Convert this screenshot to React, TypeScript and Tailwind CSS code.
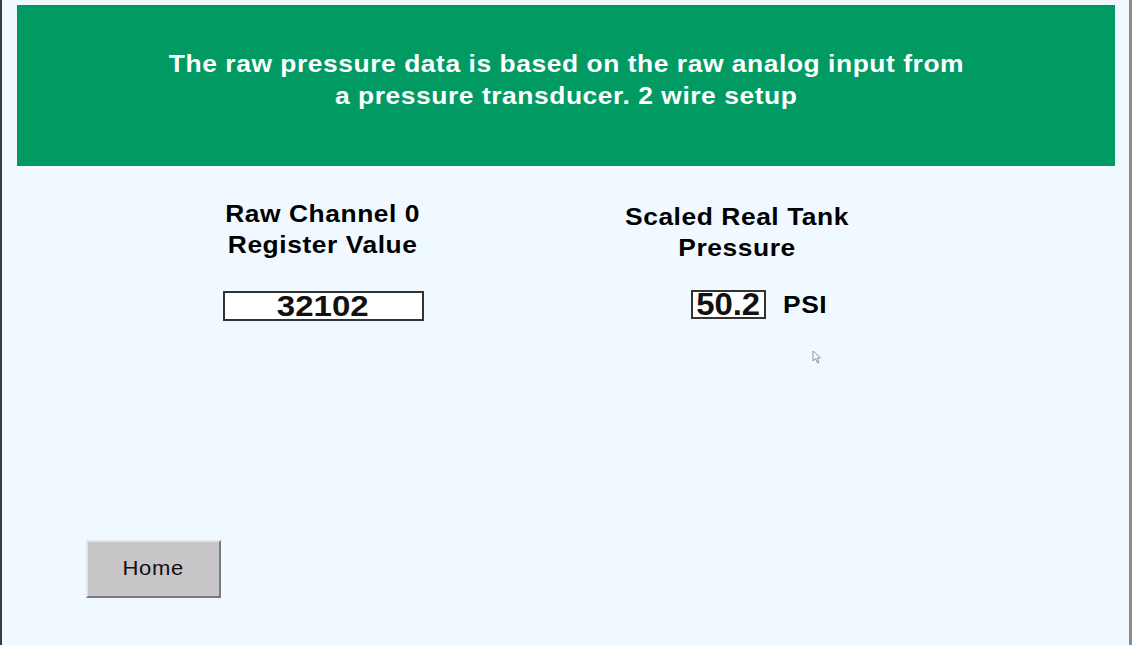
export default function App() {
  return (
    <div
      className="relative flex h-[645px] w-full flex-col border-l-2 border-r-[3px] border-l-[#3c3c3c] border-r-[#8a8a8a] bg-[#f0f9ff] pt-[5px]"
      style={{ fontFamily: '"Liberation Sans", Arial, sans-serif' }}
    >
      {/* header banner */}
      <div className="ml-[15px] flex h-[161px] w-[1098px] flex-col items-center justify-center bg-[#009a62] pb-[11px] text-[24px] font-bold leading-[32px] tracking-[0.5px] text-white">
        <div className="scale-x-[1.1]">The raw pressure data is based on the raw analog input from</div>
        <div className="scale-x-[1.1]">a pressure transducer. 2 wire setup</div>
      </div>

      <div className="ml-[191px] mt-[32px] flex gap-[154px]">
        {/* raw channel */}
        <div className="flex w-[260px] flex-col items-center">
          <div className="scale-x-[1.1] text-center text-[24px] font-bold leading-[31px] tracking-[0.5px] text-black">
            <div>Raw Channel 0</div>
            <div>Register Value</div>
          </div>
          <div className="mt-[31px] flex h-[30px] w-[201px] items-center justify-center border-2 border-[#333] bg-white text-[30px] font-bold leading-none text-[#111]">
            <span className="scale-x-[1.1]">32102</span>
          </div>
        </div>

        {/* scaled pressure */}
        <div className="mt-[3px] flex w-[260px] flex-col">
          <div className="scale-x-[1.1] text-center text-[24px] font-bold leading-[31px] tracking-[0.5px] text-black">
            <div>Scaled Real Tank</div>
            <div>Pressure</div>
          </div>
          <div className="mt-[27px] flex items-center pl-[84px]">
            <div className="flex h-[29px] w-[75px] items-center justify-center border-2 border-[#333] bg-white text-[31px] font-bold leading-none text-[#111]">
              <span className="scale-x-[1.06]">50.2</span>
            </div>
            <div className="ml-[19px] scale-x-[1.1] text-[24px] font-bold leading-none tracking-[0.5px] text-black">PSI</div>
          </div>
        </div>
      </div>

      <button className="ml-[84px] mt-[219px] flex h-[58px] w-[135px] items-center justify-center border-2 border-b-[#7a7a7a] border-l-[#e4e4e4] border-r-[#7a7a7a] border-t-[#e4e4e4] bg-[#c7c5c7] pb-[3px] text-[21px] tracking-[0.6px] text-[#111]">
        <span className="scale-x-[1.05]">Home</span>
      </button>

      {/* mouse cursor */}
      <svg
        className="absolute left-[810px] top-[350px]"
        width="10"
        height="14"
        viewBox="0 0 10 14"
      >
        <path d="M1 1 L1 11 L3.5 8.5 L5.5 13 L7 12.3 L5 8 L8.5 8 Z" fill="#fff" stroke="#777" strokeWidth="0.8" />
      </svg>
    </div>
  );
}
